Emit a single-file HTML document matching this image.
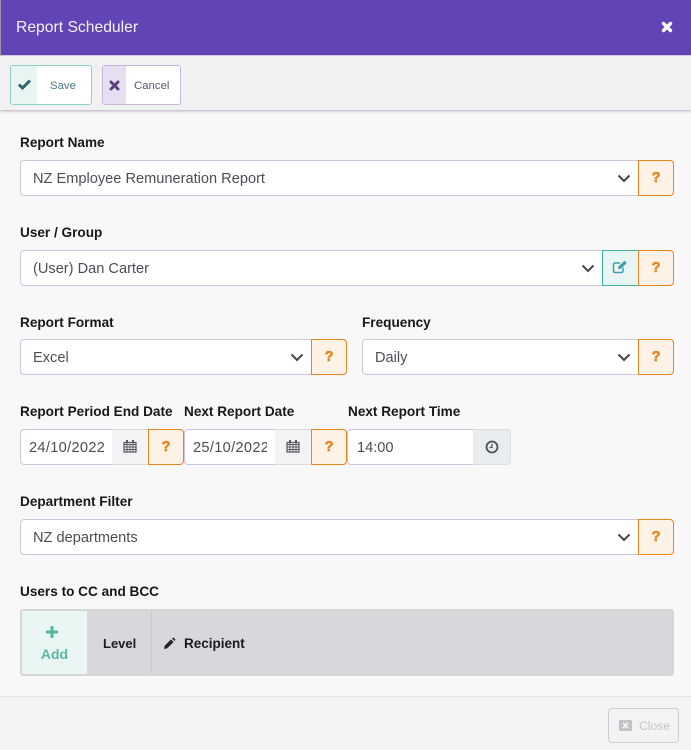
<!DOCTYPE html>
<html lang="en">
<head>
<meta charset="utf-8">
<title>Report Scheduler</title>
<style>
html,body{margin:0;padding:0}
body{width:691px;height:750px;position:relative;overflow:hidden;background:#f8f8f8;font-family:"Liberation Sans",sans-serif;color:#495057}
div,span{box-sizing:border-box}
.a{position:absolute}
.lb{position:absolute;font-size:13.6px;font-weight:bold;color:#17171c;line-height:20px;white-space:nowrap}
.in{position:absolute;height:36px;background:#fff;border:1px solid #cfc4de;border-radius:4px 0 0 4px;font-size:14.6px;line-height:36px;padding-left:12px;color:#4a4f55;white-space:nowrap;overflow:hidden}
.q{position:absolute;width:36px;height:36px;background:#fdf2e5;border:1px solid #e5851f;border-radius:0 4px 4px 0;color:#e5851f;font-weight:bold;font-size:14.5px;line-height:35px;text-align:center;-webkit-text-stroke:.5px #e5851f}
.ch{position:absolute;width:14px;height:9px}
.ap{position:absolute;height:36px;background:#f3f3f5;border:1px solid #dcd8e4;border-left:0}
.dt{position:absolute;left:8px;top:0;height:34px;width:75px;overflow:hidden;letter-spacing:.32px}
</style>
</head>
<body>
<!-- header -->
<div class="a" style="left:0;top:0;width:691px;height:56px;background:#6244b6;border-left:1px solid #9c93b0;border-bottom:1px solid #dcd8e2"></div>
<div class="a" style="left:16px;top:18px;font-size:15.7px;line-height:20px;color:#f4f1fb;white-space:nowrap">Report Scheduler</div>
<svg class="a" style="left:660px;top:20px" width="14" height="14" viewBox="0 0 14 14"><path d="M3.500 3.500l7 7M10.500 3.500l-7 7" stroke="#fff" stroke-width="3.400" stroke-linecap="round"/></svg>

<!-- toolbar -->
<div class="a" style="left:0;top:56px;width:691px;height:54px;background:#f1f1f1;box-shadow:0 1px 3px rgba(90,70,120,.45)"></div>
<div class="a" style="left:10px;top:65px;width:82px;height:40px;background:#fff;border:1px solid #8fd3c6;border-radius:3px;overflow:hidden">
  <div class="a" style="left:0;top:0;width:26px;height:38px;background:#e8f5f3"></div>
  <svg class="a" style="left:7px;top:13px" width="13" height="11" viewBox="0 0 13 11"><path d="M1 5.500l3.500 3.500L12 1.500" fill="none" stroke="#2f6670" stroke-width="3"/></svg>
  <div class="a" style="left:39px;top:12px;font-size:11.400px;line-height:16px;color:#4d7480">Save</div>
</div>
<div class="a" style="left:102px;top:65px;width:79px;height:40px;background:#fff;border:1px solid #c5b7da;border-radius:3px;overflow:hidden">
  <div class="a" style="left:0;top:0;width:23px;height:38px;background:#e5dff1"></div>
  <svg class="a" style="left:6px;top:14px" width="11" height="11" viewBox="0 0 11 11"><path d="M2 2l7 7M9 2l-7 7" stroke="#5a4278" stroke-width="3" stroke-linecap="round"/></svg>
  <div class="a" style="left:31px;top:12px;font-size:11.400px;line-height:16px;color:#5a5378">Cancel</div>
</div>

<!-- Report Name -->
<div class="lb" style="left:20px;top:133px">Report Name</div>
<div class="in" style="left:20px;top:160px;width:619px">NZ Employee Remuneration Report</div>
<svg class="ch" style="left:617px;top:174px" viewBox="0 0 14 9"><path d="M1.500 1.500L7 7l5.500-5.500" fill="none" stroke="#41464c" stroke-width="2"/></svg>
<div class="q" style="left:638px;top:160px">?</div>

<!-- User / Group -->
<div class="lb" style="left:20px;top:223px">User / Group</div>
<div class="in" style="left:20px;top:250px;width:583px">(User) Dan Carter</div>
<svg class="ch" style="left:581px;top:264px" viewBox="0 0 14 9"><path d="M1.500 1.500L7 7l5.500-5.500" fill="none" stroke="#41464c" stroke-width="2"/></svg>
<div class="a" style="left:602px;top:250px;width:37px;height:36px;background:#e8f5f3;border:1px solid #43b0a4"></div>
<svg class="a" style="left:612px;top:260px" width="16" height="14" viewBox="0 0 16 14"><path d="M11 7.500V11a1.500 1.500 0 0 1-1.500 1.500H3A1.500 1.500 0 0 1 1.500 11V4.500A1.500 1.500 0 0 1 3 3h5" fill="none" stroke="#3f9cae" stroke-width="1.500"/><path d="M6 9l.5-2.500L12.500 .8l2.300 2.200-6 5.700z" fill="#3f9cae"/></svg>
<div class="q" style="left:638px;top:250px">?</div>

<!-- Format / Frequency -->
<div class="lb" style="left:20px;top:313px">Report Format</div>
<div class="in" style="left:20px;top:339px;width:292px">Excel</div>
<svg class="ch" style="left:290px;top:353px" viewBox="0 0 14 9"><path d="M1.500 1.500L7 7l5.500-5.500" fill="none" stroke="#41464c" stroke-width="2"/></svg>
<div class="q" style="left:311px;top:339px">?</div>
<div class="lb" style="left:362px;top:313px">Frequency</div>
<div class="in" style="left:362px;top:339px;width:277px">Daily</div>
<svg class="ch" style="left:617px;top:353px" viewBox="0 0 14 9"><path d="M1.500 1.500L7 7l5.500-5.500" fill="none" stroke="#41464c" stroke-width="2"/></svg>
<div class="q" style="left:638px;top:339px">?</div>

<!-- Dates -->
<div class="lb" style="left:20px;top:402px">Report Period End Date</div>
<div class="in" style="left:20px;top:429px;width:93px"><span class="dt">24/10/2022</span></div>
<div class="ap" style="left:112px;top:429px;width:37px"></div>
<svg class="a" style="left:123px;top:439px" width="14" height="14" viewBox="0 0 14 14"><path d="M1 3.500h12V13H1z" fill="none" stroke="#5a5662" stroke-width="1.200"/><path d="M1 5.500h12M1 8h12M1 10.500h12M4 5.500V13M7 5.500V13M10 5.500V13" stroke="#5a5662" stroke-width=".9"/><path d="M3 1h2v3.500H3zM9 1h2v3.500H9z" fill="#5a5662"/></svg>
<div class="q" style="left:148px;top:429px">?</div>

<div class="lb" style="left:184px;top:402px">Next Report Date</div>
<div class="in" style="left:184px;top:429px;width:92px"><span class="dt" style="width:74px">25/10/2022</span></div>
<div class="ap" style="left:275px;top:429px;width:37px"></div>
<svg class="a" style="left:286px;top:439px" width="14" height="14" viewBox="0 0 14 14"><path d="M1 3.500h12V13H1z" fill="none" stroke="#5a5662" stroke-width="1.200"/><path d="M1 5.500h12M1 8h12M1 10.500h12M4 5.500V13M7 5.500V13M10 5.500V13" stroke="#5a5662" stroke-width=".9"/><path d="M3 1h2v3.500H3zM9 1h2v3.500H9z" fill="#5a5662"/></svg>
<div class="q" style="left:311px;top:429px">?</div>

<div class="lb" style="left:348px;top:402px">Next Report Time</div>
<div class="in" style="left:347px;top:429px;width:127px;padding-left:9px">14:00</div>
<div class="a" style="left:473px;top:429px;width:38px;height:36px;background:#e9ecef;border:1px solid #dcdde3;border-left:0;border-radius:0 4px 4px 0"></div>
<svg class="a" style="left:485px;top:440px" width="14" height="14" viewBox="0 0 14 14"><circle cx="7" cy="7" r="5.500" fill="none" stroke="#4c5057" stroke-width="1.800"/><path d="M7 3.800V7.500H4.500" fill="none" stroke="#4c5057" stroke-width="1.200"/></svg>

<!-- Department -->
<div class="lb" style="left:20px;top:492px">Department Filter</div>
<div class="in" style="left:20px;top:519px;width:619px">NZ departments</div>
<svg class="ch" style="left:617px;top:533px" viewBox="0 0 14 9"><path d="M1.500 1.500L7 7l5.500-5.500" fill="none" stroke="#41464c" stroke-width="2"/></svg>
<div class="q" style="left:638px;top:519px">?</div>

<!-- Grid -->
<div class="lb" style="left:20px;top:582px">Users to CC and BCC</div>
<div class="a" style="left:20px;top:609px;width:654px;height:67px;background:#d9d6dc;border:2px solid #d6d6d6;border-radius:3px;overflow:hidden">
  <div class="a" style="left:0;top:0;width:65px;height:63px;background:#e9f6f3"></div>
  <svg class="a" style="left:24px;top:15px" width="12" height="12" viewBox="0 0 12 12"><path d="M6 0v12M0 6h12" stroke="#55b5a3" stroke-width="3"/></svg>
  <div class="a" style="left:0;top:34px;width:65px;text-align:center;font-size:14px;font-weight:bold;line-height:18px;color:#5cb8a6">Add</div>
  <div class="a" style="left:129px;top:0;width:1px;height:63px;background:#cdcace"></div>
  <div class="a" style="left:81px;top:24px;font-size:13px;font-weight:bold;line-height:18px;color:#1b1b22">Level</div>
  <svg class="a" style="left:141px;top:26px" width="13" height="13" viewBox="0 0 13 13"><path d="M1 12l.7-3.300L8 2.400l2.600 2.600L4.300 11.300zM9 1.400l.7-.5a1 1 0 0 1 1.300 0l1.100 1.100a1 1 0 0 1 0 1.300l-.5.700z" fill="#25252b"/></svg>
  <div class="a" style="left:162px;top:24px;font-size:13.500px;font-weight:bold;line-height:18px;color:#1b1b22">Recipient</div>
</div>

<!-- Footer -->
<div class="a" style="left:0;top:696px;width:691px;height:54px;background:#f3f3f3;border-top:1px solid #e4e4e4"></div>
<div class="a" style="left:608px;top:708px;width:71px;height:35px;border:1px solid #cfcfcf;border-radius:4px"></div>
<div class="a" style="left:619px;top:720px;width:13px;height:11px;background:#c4c2c8;border-radius:1px"></div>
<svg class="a" style="left:622px;top:722px" width="7" height="7" viewBox="0 0 7 7"><path d="M1 1l5 5M6 1l-5 5" stroke="#f3f3f3" stroke-width="1.800"/></svg>
<div class="a" style="left:639px;top:717px;font-size:12.200px;line-height:18px;color:#c6c6c8">Close</div>
</body>
</html>
